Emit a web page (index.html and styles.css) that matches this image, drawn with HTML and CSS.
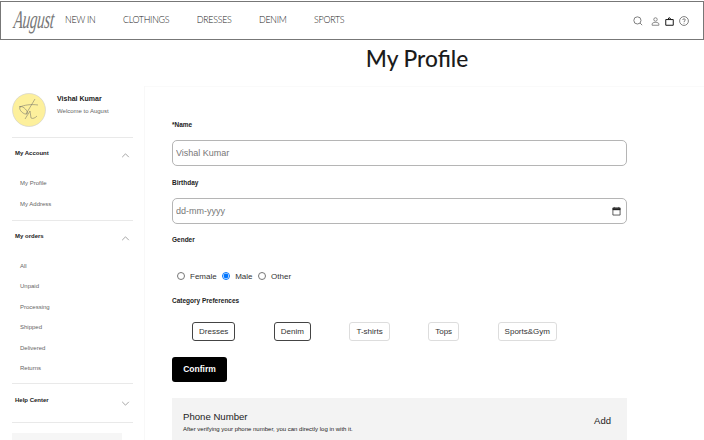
FILE: index.html
```html
<!DOCTYPE html>
<html lang="en">
<head>
<meta charset="utf-8">
<title>My Profile</title>
<link rel="stylesheet" href="styles.css">
</head>
<body>
<header class="topbar">
  <a class="logo">August</a>
  <nav class="mainnav">
    <a>NEW IN</a><a>CLOTHINGS</a><a>DRESSES</a><a>DENIM</a><a>SPORTS</a>
  </nav>
  <div class="tools">
    <svg class="tool" viewBox="0 0 12 12"><circle cx="5.3" cy="5.3" r="4.300"/><path d="M8.500 8.500 11 11"/></svg>
    <svg class="tool tool-user" viewBox="0 0 12 12"><circle cx="6" cy="3.3" r="2.300"/><path d="M1.500 11V9.400C1.500 7.900 3.400 7.200 6 7.200s4.500.7 4.500 2.200V11z"/></svg>
    <svg class="tool tool-bag" viewBox="0 0 12 12"><path d="M1 3.400h10v7.600H1z"/><path d="M3.800 3.400 5.400.8 8.600 3.400"/></svg>
    <svg class="tool" viewBox="0 0 12 12"><circle cx="6" cy="6" r="5.300"/><path d="M4.500 4.800C4.500 3.800 5.200 3.300 6 3.300s1.500.5 1.500 1.400C7.500 5.900 6 5.800 6 7.200M6 8.200v.9"/></svg>
  </div>
</header>

<h1 class="title">My Profile</h1>

<div class="page">
  <aside class="sidebar">
    <div class="user">
      <svg class="avatar" viewBox="0 0 34 34">
        <circle class="avatar-bg" cx="17" cy="17" r="16.500"/>
        <path class="avatar-sign" d="M23 6 14 21M8 14C12 12 19 11 26 12M8 13C6 17 12 22 15 21 17 19 11 12 8 14ZM13 26 18 18 19 25C21 26 23 25 25 23"/>
      </svg>
      <div class="user-text">
        <strong class="user-name">Vishal Kumar</strong>
        <span class="user-hello">Welcome to August</span>
      </div>
    </div>

    <section class="group">
      <div class="group-head"><b>My Account</b><svg class="chev" viewBox="0 0 10 6"><path d="M1 5 5 1l4 4"/></svg></div>
      <ul class="links links-account">
        <li class="active">My Profile</li>
        <li>My Address</li>
      </ul>
    </section>

    <section class="group">
      <div class="group-head"><b>My orders</b><svg class="chev" viewBox="0 0 10 6"><path d="M1 5 5 1l4 4"/></svg></div>
      <ul class="links links-orders">
        <li>All</li><li>Unpaid</li><li>Processing</li><li>Shipped</li><li>Delivered</li><li>Returns</li>
      </ul>
    </section>

    <section class="group group-help">
      <div class="group-head"><b>Help Center</b><svg class="chev chev-down" viewBox="0 0 10 6"><path d="M1 1l4 4 4-4"/></svg></div>
    </section>

    <div class="promo"></div>
  </aside>

  <main class="content">
    <form class="form">
      <label class="label label-name" for="name">*Name</label>
      <input class="field" id="name" type="text" placeholder="Vishal Kumar">

      <label class="label label-birthday" for="birthday">Birthday</label>
      <div class="date-wrap">
        <input class="field" id="birthday" type="text" placeholder="dd-mm-yyyy">
        <svg class="cal" viewBox="0 0 10 10"><path d="M1 1.500h8v8H1z"/><path class="cal-top" d="M1 2h8v1.800H1zM2.800.5v1.500M7.200.5v1.500"/></svg>
      </div>

      <span class="label label-gender">Gender</span>
      <div class="radios">
        <label class="radio"><input type="radio" name="gender"><span>Female</span></label>
        <label class="radio"><input type="radio" name="gender" checked><span>Male</span></label>
        <label class="radio"><input type="radio" name="gender"><span>Other</span></label>
      </div>

      <span class="label label-cat">Category Preferences</span>
      <div class="chips">
        <button type="button" class="chip on">Dresses</button>
        <button type="button" class="chip on">Denim</button>
        <button type="button" class="chip">T-shirts</button>
        <button type="button" class="chip">Tops</button>
        <button type="button" class="chip">Sports&amp;Gym</button>
      </div>

      <button type="button" class="confirm">Confirm</button>
    </form>

    <div class="phone">
      <div>
        <div class="phone-title">Phone Number</div>
        <div class="phone-note">After verifying your phone number, you can directly log in with it.</div>
      </div>
      <a class="phone-add">Add</a>
    </div>
  </main>
</div>
</body>
</html>
```
FILE: styles.css
```css
* { box-sizing: border-box; }
html, body { margin: 0; height: 100%; overflow: hidden; background: #fff; }
body { font-family: "Liberation Sans", Arial, sans-serif; color: #111; }

.topbar {
  margin-top: 1px;
  height: 39px;
  display: flex;
  align-items: center;
  border: 1px solid #777;
  border-bottom-width: 1.500px;
  padding: 0 14px 0 13px;
}
.logo {
  width: 51px;
  flex: none;
  font: italic 15px/1 "Liberation Serif", serif;
  letter-spacing: -.3px;
  color: #777;
  transform: scaleY(1.700) skewX(-10deg);
  transform-origin: left center;
}
.mainnav {
  display: flex;
  gap: 27.500px;
  font: 300 8.900px/1 Lato, sans-serif;
  letter-spacing: -.28px;
  color: #222;
}
.mainnav a { white-space: nowrap; }
.tools { margin-left: auto; display: flex; gap: 5px; align-items: center; padding-top: 1px; }
.tool { width: 10px; height: 10px; fill: none; stroke: #666; stroke-width: 1; overflow: visible; }
.tool-user { width: 9px; height: 9px; margin-left: 3px; }
.tool-bag { width: 9px; height: 9px; stroke: #111; stroke-width: 1.300; }

.title {
  margin: 0;
  height: 46px;
  padding-top: 4px;
  text-align: center;
  font: 500 22.700px/30px Lato, sans-serif;
  color: #1b1b1b;
  padding-left: 130px;
}

.page {
  display: flex;
  height: 354px;
}
.sidebar {
  width: 145px;
  flex: none;
  padding: 0 11px 0 12px;
  border-right: 1px solid #f8f8f8;
  overflow: hidden;
}
.user {
  display: flex;
  gap: 11px;
  height: 51px;
  padding-top: 7px;
}
.avatar { width: 34px; height: 34px; flex: none; }
.avatar-bg { fill: #fdf09c; stroke: #ccc; stroke-width: .6; }
.avatar-sign { fill: none; stroke: #666; stroke-width: .5; }
.user-text { display: flex; flex-direction: column; gap: 4px; padding-top: 2px; }
.user-name { font-size: 7px; line-height: 8px; color: #222; }
.user-hello { font-size: 6px; line-height: 8px; color: #666; }

.group { border-top: 1.500px solid #e9e9e9; }
.group-head {
  display: flex;
  justify-content: space-between;
  height: 30px;
  padding: 12px 3px 0 3px;
  font-size: 6px;
  line-height: 7px;
  color: #222;
}
.chev { width: 9px; height: 5px; margin-top: 3px; fill: none; stroke: #666; stroke-width: .7; }
.chev-down { margin-top: 4px; }
.links { list-style: none; margin: 0; padding: 0 0 0 8px; font-size: 6px; line-height: 7px; color: #666; }
.links-account { padding-top: 12px; height: 51.500px; }
.links-account li + li { margin-top: 14px; }
.links-orders { padding-top: 12px; height: 132px; }
.links-orders li { height: 20.600px; }
.group-help { height: 39px; }
.group-help .group-head { padding-top: 13px; }
.promo {
  border-top: 1.500px solid #e9e9e9;
  height: 40px;
  position: relative;
}
.promo::after {
  content: "";
  position: absolute;
  left: 0;
  top: 10px;
  width: 110px;
  height: 30px;
  background: #f6f6f6;
}

.content {
  flex: 1;
  border-top: 1px solid #fafafa;
  padding: 0 77px 0 27px;
  overflow: hidden;
}
.form { display: flex; flex-direction: column; align-items: flex-start; }
.label { font-size: 6.500px; line-height: 8px; font-weight: 700; color: #222; display: block; }
.label-name { margin-top: 34px; }
.field {
  display: block;
  width: 455px;
  height: 26px;
  margin: 0;
  border: 1px solid #b5b5b5;
  border-radius: 5px;
  padding: 0 3px;
  font: 9px "Liberation Sans", sans-serif;
  background: #fff;
  color: #333;
}
.field::placeholder { color: #777; opacity: 1; }
#name { margin-top: 11px; padding-left: 3px; }
.label-birthday { margin-top: 13px; }
.date-wrap { position: relative; margin-top: 11px; }
.cal { position: absolute; right: 6px; top: 8px; width: 9px; height: 10px; fill: none; stroke: #222; stroke-width: .8; }
.cal-top { fill: #222; stroke-width: .5; }
.label-gender { margin-top: 12px; }
.radios { display: flex; align-items: center; margin: 27px 0 0 5px; height: 10px; gap: 5.500px; font-size: 8px; color: #333; }
.radio { display: flex; align-items: center; gap: 5px; }
.radio input { margin: 0; width: 8px; height: 8px; accent-color: #0075ff; }
.label-cat { margin-top: 16px; }
.chips { display: flex; gap: 38.500px; margin: 17px 0 0 20px; }
.chip {
  height: 19px;
  padding: 0 6px;
  background: #fff;
  border: 1px solid #ddd;
  border-radius: 3px;
  font: 8px "Liberation Sans", sans-serif;
  color: #333;
}
.chip.on { border-color: #444; }
.confirm {
  margin-top: 16px;
  width: 55px;
  height: 25px;
  border: 0;
  border-radius: 3px;
  background: #000;
  color: #fff;
  font: 700 8.500px "Liberation Sans", sans-serif;
  padding: 0 0 2px;
}
.phone {
  margin-top: 16px;
  width: 455px;
  height: 42px;
  background: #f3f3f3;
  display: flex;
  justify-content: space-between;
  align-items: flex-start;
  padding: 13px 16px 0 11px;
}
.phone-title { font: 9.600px/12px "Liberation Sans", sans-serif; color: #222; }
.phone-note { font-size: 6px; line-height: 7px; margin-top: 3px; color: #222; }
.phone-add { font-size: 9.500px; line-height: 12px; margin-top: 4px; color: #222; }
```
